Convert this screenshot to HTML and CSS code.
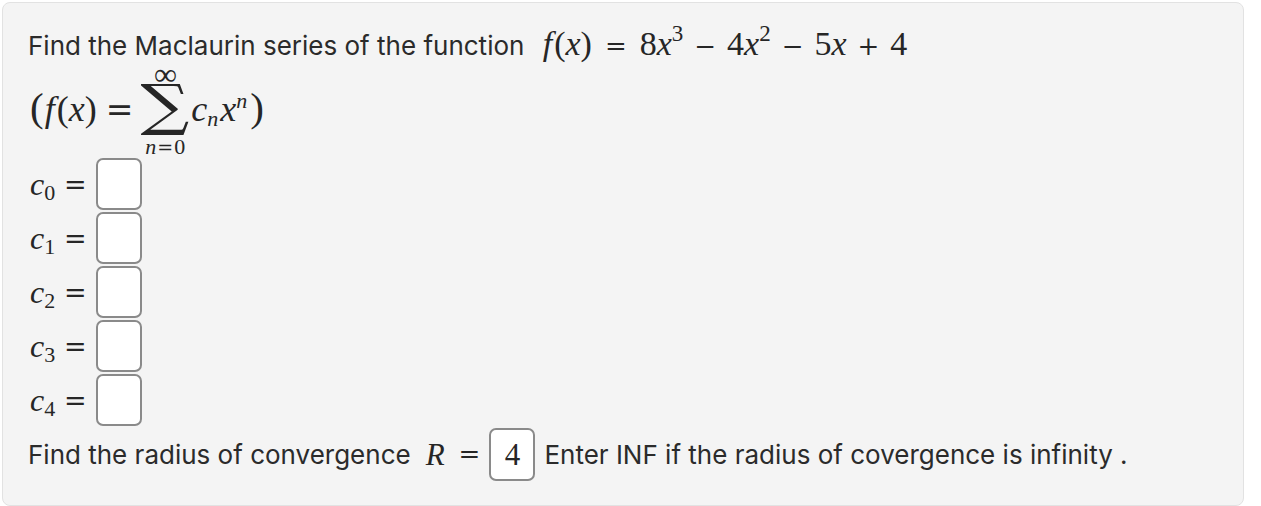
FILE: index.html
```html
<!DOCTYPE html>
<html>
<head>
<meta charset="utf-8">
<link rel="stylesheet" href="styles.css">
</head>
<body>
<div class="card">
  <p class="line1">Find the Maclaurin series of the function <span class="m m1"><i class="fi">f</i>(<i>x</i>)<span class="op rel">=</span>8<i>x</i><sup>3</sup><span class="op bin">−</span>4<i>x</i><sup>2</sup><span class="op bin">−</span>5<i>x</i><span class="op bin">+</span>4</span></p>
  <div class="line2">
    <span class="m m2"><span class="bigp">(</span><i class="fi">f</i>(<i>x</i>)<span class="op rel2">=</span></span>
    <span class="sum">
      <span class="lim top">∞</span>
      <span class="sigma">∑</span>
      <span class="lim bot"><i>n</i><span class="op leq">=</span>0</span>
    </span>
    <span class="m m2"><i>c</i><sub><i>n</i></sub><i class="xi">x</i><sup><i>n</i></sup><span class="bigp rp">)</span></span>
  </div>
  <div class="rows">
    <div class="row"><span class="m lab"><i>c</i><sub>0</sub></span><span class="m op eq">=</span><span class="box"></span></div>
    <div class="row"><span class="m lab"><i>c</i><sub>1</sub></span><span class="m op eq">=</span><span class="box"></span></div>
    <div class="row"><span class="m lab"><i>c</i><sub>2</sub></span><span class="m op eq">=</span><span class="box"></span></div>
    <div class="row"><span class="m lab"><i>c</i><sub>3</sub></span><span class="m op eq">=</span><span class="box"></span></div>
    <div class="row"><span class="m lab"><i>c</i><sub>4</sub></span><span class="m op eq">=</span><span class="box"></span></div>
  </div>
  <div class="last">
    <span class="txt">Find the radius of convergence</span>
    <span class="m rvar"><i>R</i></span>
    <span class="m op eq2">=</span>
    <span class="box ans"><span class="m four">4</span></span>
    <span class="txt">Enter INF if the radius of covergence is infinity .</span>
  </div>
</div>
</body>
</html>
```
FILE: styles.css
```css
html, body {
  margin: 0;
  padding: 0;
  background: #ffffff;
}
body {
  font-family: Inter, "Noto Sans", sans-serif;
  color: #2b2b2b;
}
.card {
  box-sizing: border-box;
  margin: 2px 0 0 2px;
  width: 1242px;
  height: 504px;
  background: #f4f4f4;
  border: 1px solid #e2e2e2;
  border-radius: 8px;
  padding: 24px 25px 0 25px;
}
.m {
  font-family: "Liberation Serif", "DejaVu Serif", serif;
  font-size: 32px;
  color: #262626;
  line-height: 1;
}
.m i {
  font-style: italic;
}
.op {
  font-family: "DejaVu Serif", "Liberation Serif", serif;
  font-style: normal;
}
.m sup, .m sub {
  font-size: 22px;
  line-height: 0;
}
.m sup {
  vertical-align: 13px;
}
.m sub {
  vertical-align: -5px;
}
.fi {
  margin-right: 2px;
}
.m1 {
  font-size: 34px;
  margin-left: 11px;
}
.m1 .op {
  font-size: 26px;
}
.m1 sup {
  font-size: 23px;
  vertical-align: 14px;
}
.rel {
  margin: 0 13px 0 13px;
}
.bin {
  margin: 0 11px;
}
.line1 {
  margin: 0;
  font-size: 26px;
  line-height: 36px;
}
.line2 {
  box-sizing: border-box;
  display: flex;
  align-items: center;
  height: 94px;
  padding-bottom: 8px;
}
.m2 {
  font-size: 36px;
}
.bigp {
  font-size: 41px;
}
.m2 .bigp:first-child {
  margin-left: 2px;
  margin-right: 1px;
}
.xi {
  margin-left: 2px;
}
.rp {
  margin-left: 3px;
}
.rel2 {
  font-size: 33px;
  margin: 0 10px 0 9px;
}
.sum {
  align-self: stretch;
  display: grid;
  grid-template-rows: 21px 50px 23px;
  justify-items: center;
  width: 44px;
  margin: 0 4px 0 0;
}
.sigma {
  font-family: "DejaVu Serif", "Liberation Serif", serif;
  font-size: 56px;
  line-height: 40px;
  align-self: start;
  transform: scaleX(1.22);
  color: #262626;
}
.lim {
  font-family: "Liberation Serif", "DejaVu Serif", serif;
  color: #262626;
  white-space: nowrap;
}
.lim.top {
  font-size: 32px;
  line-height: 21px;
}
.lim.bot {
  font-size: 22px;
  line-height: 23px;
}
.leq {
  font-size: 19px;
  margin: 0 1px;
}
.rows {
  display: flex;
  flex-direction: column;
  gap: 2px;
}
.row {
  display: flex;
  align-items: center;
  height: 52px;
}
.lab {
  width: 34px;
  margin-left: 2px;
}
.eq {
  font-size: 27px;
  width: 32px;
}
.box {
  box-sizing: border-box;
  width: 46px;
  height: 52px;
  background: #ffffff;
  border: 2px solid #8a8a8a;
  border-radius: 7px;
}
.last {
  display: flex;
  align-items: center;
  height: 54px;
  margin-top: 1px;
}
.txt {
  font-size: 26px;
}
.rvar {
  font-size: 31px;
  margin-left: 15px;
}
.eq2 {
  font-size: 26px;
  margin: 0 9px 0 14px;
}
.ans {
  height: 53px;
  display: flex;
  align-items: center;
  justify-content: center;
  margin-right: 9px;
}
.four {
  font-size: 31px;
}
```
